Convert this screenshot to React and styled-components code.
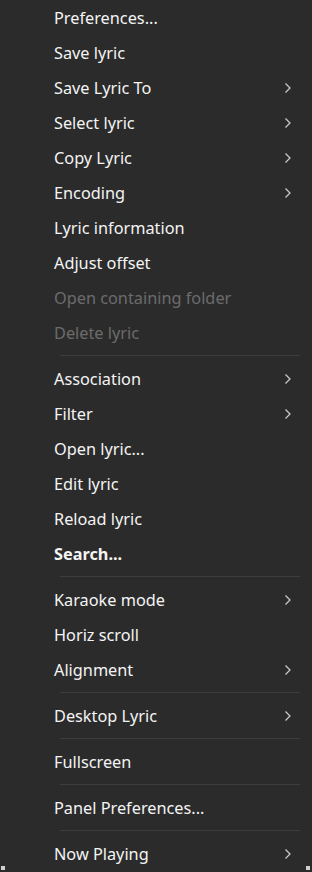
import React from "react";
import styled, { createGlobalStyle } from "styled-components";

const Global = createGlobalStyle`
  html, body { margin: 0; padding: 0; background: #2b2b2b; }
  body { width: 312px; height: 872px; overflow: hidden; }
`;

const Menu = styled.div`
  position: relative;
  width: 312px;
  height: 872px;
  box-sizing: border-box;
  background: #2b2b2b;
  border-top-right-radius: 8px;
  font-family: "Segoe UI", "Noto Sans", "Open Sans", sans-serif;
  font-size: 16.3px;
  display: flex;
  flex-direction: column;
`;

const Item = styled.div`
  height: 35px;
  display: flex;
  align-items: center;
  padding-left: 54px;
  padding-right: 20px;
  color: ${(p) => (p.$disabled ? "#6b6b6b" : "#f4f4f4")};
  font-weight: ${(p) => (p.$bold ? 700 : 400)};
`;

const Label = styled.span`
  flex: 1;
`;

const Sep = styled.div`
  height: 11px;
  display: flex;
  align-items: center;
  padding-left: 60px;
  padding-right: 12px;
  &::after {
    content: "";
    flex: 1;
    height: 1px;
    background: #3d3d3d;
  }
`;

const Corner = styled.div`
  position: absolute;
  bottom: 2px;
  ${(p) => (p.$right ? "right: 2px;" : "left: 1px;")}
  width: 4px;
  height: 4px;
  background: #cfcfcf;
`;

const Chevron = () => (
  <svg width="8" height="12" viewBox="0 0 8 12">
    <polyline points="1.5,1.5 6,6 1.5,10.5" fill="none" stroke="#c8c8c8" strokeWidth="1.3" />
  </svg>
);

const items = [
  ["Preferences..."],
  ["Save lyric"],
  ["Save Lyric To", "sub"],
  ["Select lyric", "sub"],
  ["Copy Lyric", "sub"],
  ["Encoding", "sub"],
  ["Lyric information"],
  ["Adjust offset"],
  ["Open containing folder", "dis"],
  ["Delete lyric", "dis"],
  "-",
  ["Association", "sub"],
  ["Filter", "sub"],
  ["Open lyric..."],
  ["Edit lyric"],
  ["Reload lyric"],
  ["Search...", "bold"],
  "-",
  ["Karaoke mode", "sub"],
  ["Horiz scroll"],
  ["Alignment", "sub"],
  "-",
  ["Desktop Lyric", "sub"],
  "-",
  ["Fullscreen"],
  "-",
  ["Panel Preferences..."],
  "-",
  ["Now Playing", "sub"],
];

export default function App() {
  return (
    <>
      <Global />
      <Menu>
        {items.map((it, i) =>
          it === "-" ? (
            <Sep key={i} />
          ) : (
            <Item key={i} $disabled={it[1] === "dis"} $bold={it[1] === "bold"}>
              <Label>{it[0]}</Label>
              {it[1] === "sub" && <Chevron />}
            </Item>
          )
        )}
        <Corner />
        <Corner $right />
      </Menu>
    </>
  );
}
